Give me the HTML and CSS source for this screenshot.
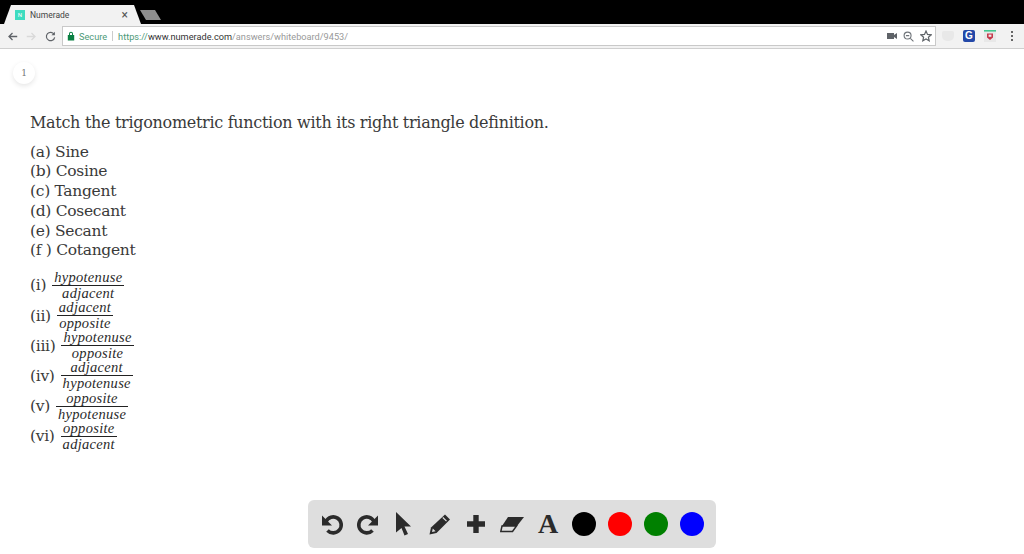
FILE: index.html
```html
<!DOCTYPE html>
<html lang="en">
<head>
    <meta charset="UTF-8">
    <title>Numerade</title>
    <link rel="stylesheet" href="styles.css">
</head>
<body>
    <div class="window">
        <!-- Tab strip -->
        <div class="tabstrip">
            <div class="tab">
                <span class="favicon">N</span>
                <span class="tab-title">Numerade</span>
                <span class="tab-close">×</span>
            </div>
            <div class="new-tab"></div>
        </div>

        <!-- Address bar -->
        <div class="toolbar">
            <svg class="nav-btn" viewBox="0 0 14 14"><path d="M13 7H3M7 2.500 2.500 7 7 11.500" fill="none" stroke="#5f6368" stroke-width="1.600"/></svg>
            <svg class="nav-btn" viewBox="0 0 14 14"><path d="M1 7h10M7 2.500 11.500 7 7 11.500" fill="none" stroke="#d9d9d9" stroke-width="1.600"/></svg>
            <svg class="nav-btn" viewBox="0 0 14 14"><path d="M11.600 4.200A5.300 5.300 0 1 0 12.300 8" fill="none" stroke="#5f6368" stroke-width="1.500"/><path d="M12.600 1v4.400H8.200z" fill="#5f6368"/></svg>
            <div class="omnibox">
                <svg class="lock" viewBox="0 0 8 10"><path d="M2 4V2.800a2 2 0 0 1 4 0V4h1.200v5.500H.8V4zm1 0h2V2.800a1 1 0 0 0-2 0z" fill="#0b8043"/></svg>
                <span class="secure">Secure</span>
                <span class="divider"></span>
                <span class="url"><span class="scheme">https://</span><span class="host">www.numerade.com</span><span class="path">/answers/whiteboard/9453/</span></span>
                <span class="omni-icons">
                    <svg viewBox="0 0 10 8" width="10" height="8"><path d="M0 1h7v2l3-2v6L7 5v2H0z" fill="#5f6368"/></svg>
                    <svg viewBox="0 0 12 12" width="11" height="11"><circle cx="5" cy="5" r="3.800" fill="none" stroke="#70757a" stroke-width="1.200"/><path d="M3.200 5h3.600M8 8l3.400 3.400" stroke="#70757a" stroke-width="1.200"/></svg>
                    <svg viewBox="0 0 12 12" width="12" height="12"><path d="M6 1l1.500 3.400 3.700.4-2.800 2.400.8 3.600L6 9 2.800 10.800l.8-3.600L.8 4.800l3.700-.4z" fill="none" stroke="#5f6368" stroke-width="1.200"/></svg>
                </span>
            </div>
            <div class="extensions">
                <span class="ext-pocket"></span>
                <span class="ext-g">G</span>
                <svg class="ext-shield" viewBox="0 0 12 12"><path d="M0 1h12v11H0z" fill="#e8e8e8"/><path d="M0 0h12v1.600H0z" fill="#43c78f"/><path d="M3 3.500h6v4L6 10 3 7.500z" fill="#c5394a"/><path d="M4.600 4.600h2.800v2.200H4.600z" fill="#eee"/></svg>
                <span class="menu-dots"><i></i><i></i><i></i></span>
            </div>
        </div>

        <!-- Whiteboard page -->
        <main class="board">
            <div class="page-badge">1</div>
            <h1 class="question">Match the trigonometric function with its right triangle definition.</h1>
            <ul class="options">
                <li>(a) Sine</li>
                <li>(b) Cosine</li>
                <li>(c) Tangent</li>
                <li>(d) Cosecant</li>
                <li>(e) Secant</li>
                <li>(f ) Cotangent</li>
            </ul>
            <ul class="ratios">
                <li><span>(i)</span><span class="frac"><span>hypotenuse</span><span>adjacent</span></span></li>
                <li><span>(ii)</span><span class="frac"><span>adjacent</span><span>opposite</span></span></li>
                <li><span>(iii)</span><span class="frac"><span>hypotenuse</span><span>opposite</span></span></li>
                <li><span>(iv)</span><span class="frac"><span>adjacent</span><span>hypotenuse</span></span></li>
                <li><span>(v)</span><span class="frac"><span>opposite</span><span>hypotenuse</span></span></li>
                <li><span>(vi)</span><span class="frac"><span>opposite</span><span>adjacent</span></span></li>
            </ul>

            <!-- Drawing tools -->
            <div class="tools">
                <svg class="tool" viewBox="0 0 24 24"><path d="M6 9.500a8 8 0 1 1 1.500 9" fill="none" stroke="#2b2b2b" stroke-width="3.600"/><path d="M2 3.500v10h10z" fill="#2b2b2b"/></svg>
                <svg class="tool" viewBox="0 0 24 24"><path d="M18 9.500a8 8 0 1 0-1.500 9" fill="none" stroke="#2b2b2b" stroke-width="3.600"/><path d="M22 3.500v10H12z" fill="#2b2b2b"/></svg>
                <svg class="tool" viewBox="0 0 24 24"><path d="M4 0l15 14.500h-6.500l3.500 7.500-3.500 1.500-3-7.500L4 20.500z" fill="#2b2b2b"/></svg>
                <svg class="tool" viewBox="0 0 24 24"><path d="M17 2.500l5 5L8.500 21 1.500 22.500 3 15.500z" fill="#2b2b2b"/><path d="M4.800 16.400l2.800 2.800-3.600.8z" fill="#dedede"/><path d="M14.800 5.500l3.700 3.700" stroke="#dedede" stroke-width="1.200"/></svg>
                <svg class="tool" viewBox="0 0 24 24"><path d="M9.300 3h5.400v6.300H21v5.400h-6.300V21H9.300v-6.300H3V9.300h6.300z" fill="#2b2b2b"/></svg>
                <svg class="tool" viewBox="0 0 24 24"><path d="M8 5h16l-7 9H2z" fill="#2b2b2b"/><path d="M2 14h14.500l-4 5.500H.8z" fill="none" stroke="#2b2b2b" stroke-width="1.500"/></svg>
                <span class="tool-text">A</span>
                <span class="swatch swatch-black"></span>
                <span class="swatch swatch-red"></span>
                <span class="swatch swatch-green"></span>
                <span class="swatch swatch-blue"></span>
            </div>
        </main>
    </div>
</body>
</html>
```

FILE: styles.css
```css
* {
    box-sizing: border-box;
}

html, body {
    margin: 0;
    height: 100%;
    overflow: hidden;
}

body {
    font-family: Roboto, sans-serif;
    background: white;
}

.window {
    display: flex;
    flex-direction: column;
    height: 100vh;
}

/* Tab strip */
.tabstrip {
    background: black;
    height: 24px;
    display: flex;
    align-items: flex-end;
    padding-left: 4px;
    flex-shrink: 0;
}

.tab {
    width: 137px;
    height: 19px;
    background: #f2f2f2;
    clip-path: polygon(0 100%, 7px 0, 130px 0, 100% 100%);
    display: flex;
    align-items: center;
    padding: 0 10px 0 11px;
    font-size: 8.500px;
    color: #444;
}

.favicon {
    width: 10px;
    height: 10px;
    background: #3ddcc0;
    color: white;
    font-size: 6px;
    line-height: 10px;
    text-align: center;
    margin-right: 5px;
}

.tab-title {
    flex: 1;
}

.tab-close {
    font-size: 12px;
    color: #555;
    margin-right: 3px;
}

.new-tab {
    width: 21px;
    height: 10px;
    margin: 0 0 4px -1px;
    background: #8e8e8e;
    clip-path: polygon(0 0, 15px 0, 100% 100%, 6px 100%);
}

/* Address bar */
.toolbar {
    height: 25px;
    background: #f2f2f2;
    border-bottom: 1px solid #cfcfcf;
    display: flex;
    align-items: center;
    padding-left: 7px;
    flex-shrink: 0;
}

.nav-btn {
    width: 11px;
    height: 11px;
    margin-right: 8px;
    flex-shrink: 0;
}

.nav-btn:nth-child(3) {
    margin-right: 6px;
}

.omnibox {
    width: 874px;
    height: 20px;
    flex-shrink: 0;
    background: white;
    border: 1px solid #c9c9c9;
    display: flex;
    align-items: center;
    padding: 0 3px 0 4px;
    font-size: 9.200px;
    white-space: nowrap;
}

.lock {
    width: 8px;
    height: 10px;
    margin-right: 4px;
}

.secure {
    color: #4d9a78;
}

.divider {
    width: 1px;
    height: 10px;
    background: #ccc;
    margin: 0 5px;
}

.scheme {
    color: #4d9a78;
}

.host {
    color: #333;
}

.path {
    color: #999;
}

.omni-icons {
    margin-left: auto;
    display: flex;
    align-items: center;
    gap: 6px;
}

.extensions {
    display: flex;
    align-items: center;
    margin-left: 6px;
    gap: 9px;
}

.ext-pocket {
    width: 12px;
    height: 10px;
    background: #e8e8e8;
    border-radius: 2px 2px 5px 5px;
}

.ext-g {
    width: 12px;
    height: 12px;
    background: #2348a8;
    color: white;
    font-family: 'Liberation Sans', sans-serif;
    font-weight: bold;
    font-size: 10px;
    line-height: 12px;
    text-align: center;
    border-radius: 2px;
}

.ext-shield {
    width: 12px;
    height: 12px;
}

.menu-dots {
    display: flex;
    flex-direction: column;
    gap: 2px;
    margin-left: 6px;
}

.menu-dots i {
    width: 2px;
    height: 2px;
    background: #666;
}

/* Whiteboard */
.board {
    flex: 1;
    position: relative;
    padding: 0 30px;
    font-family: 'DejaVu Serif', serif;
    color: #3a3a3a;
}

.page-badge {
    position: absolute;
    left: 13px;
    top: 13px;
    width: 22px;
    height: 22px;
    border-radius: 50%;
    background: white;
    box-shadow: 0 2px 5px rgba(0, 0, 0, 0.1);
    font-size: 9px;
    line-height: 22px;
    text-align: center;
    color: #777;
}

.question {
    margin: 62px 0 0;
    font-size: 16px;
    letter-spacing: -0.300px;
    font-weight: normal;
    line-height: 24px;
    white-space: nowrap;
}

.options, .ratios {
    list-style: none;
    margin: 0;
    padding: 0;
}

.options {
    margin-top: 7.500px;
    font-size: 15.500px;
    letter-spacing: -0.300px;
    line-height: 19.800px;
}

.ratios {
    margin-top: 9px;
    font-size: 15.500px;
    letter-spacing: -0.300px;
}

.ratios li {
    height: 30.200px;
    display: flex;
    align-items: center;
    gap: 6px;
}

.frac {
    display: inline-flex;
    flex-direction: column;
    align-items: center;
    font-family: 'Liberation Serif', serif;
    font-style: italic;
    font-size: 14.500px;
    line-height: 15px;
    letter-spacing: 0.300px;
    color: #2a2a2a;
}

.frac span {
    padding: 0 2px;
}

.frac span:first-child {
    border-bottom: 1px solid #222;
    width: 100%;
    text-align: center;
}

/* Drawing tools */
.tools {
    position: absolute;
    left: 308px;
    bottom: 6px;
    width: 408px;
    height: 48px;
    background: #dedede;
    border-radius: 6px;
    display: flex;
    align-items: center;
    gap: 12px;
    padding: 0 12px;
}

.tool {
    width: 24px;
    height: 24px;
}

.tool-text {
    width: 24px;
    font-family: 'Liberation Serif', serif;
    font-weight: bold;
    font-size: 28px;
    line-height: 1;
    text-align: center;
    color: #2b2b2b;
}

.swatch {
    width: 24px;
    height: 24px;
    border-radius: 50%;
}

.swatch-black {
    background: black;
}

.swatch-red {
    background: red;
}

.swatch-green {
    background: green;
}

.swatch-blue {
    background: blue;
}
```
